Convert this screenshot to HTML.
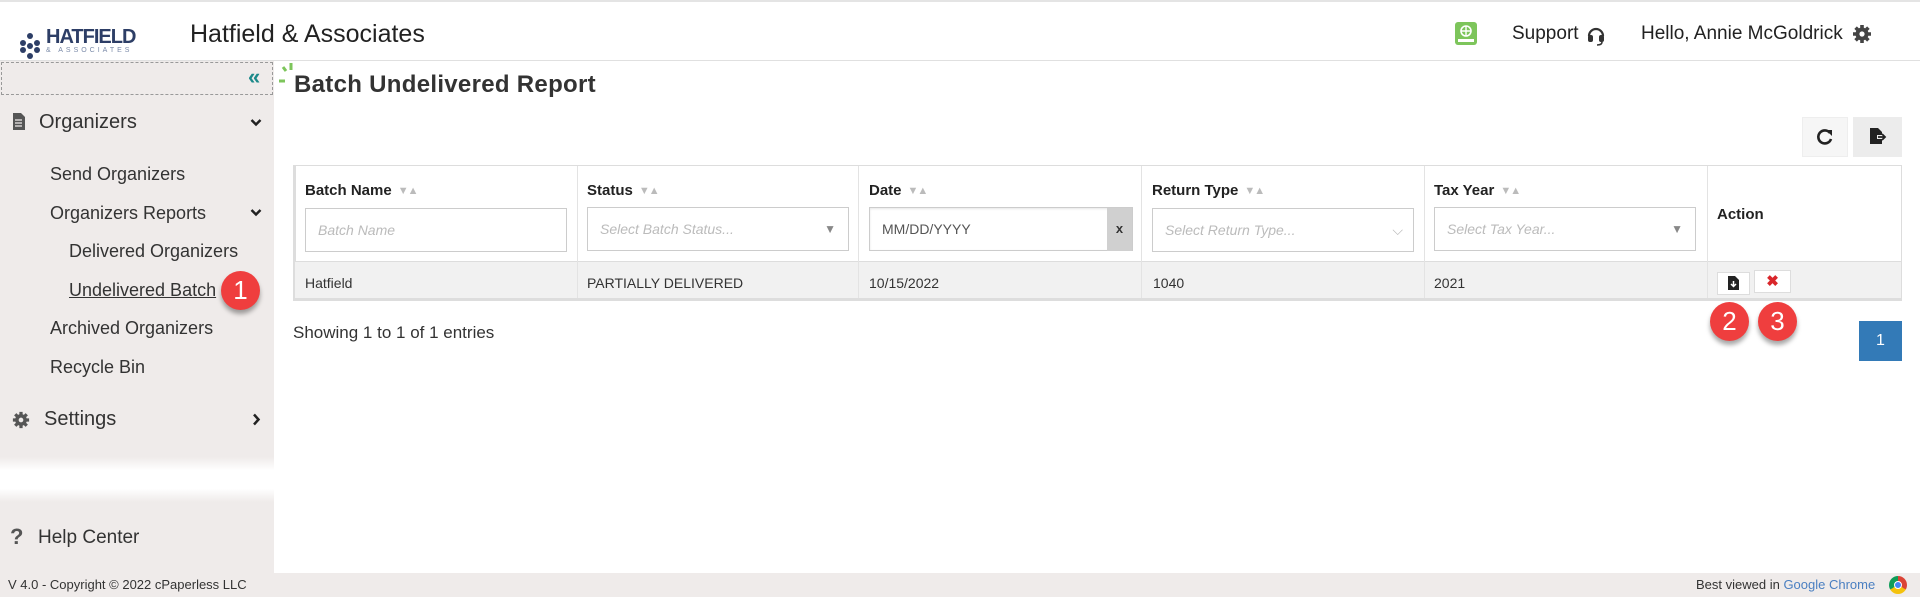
<!DOCTYPE html>
<html><head><meta charset="utf-8">
<style>
*{box-sizing:border-box;margin:0;padding:0}
body{width:1920px;height:597px;overflow:hidden;background:#fff;font-family:"Liberation Sans",Arial,sans-serif;color:#222;position:relative}
.a{position:absolute;white-space:nowrap}
.side{position:absolute;left:0;top:61px;width:274px;height:512px;background:#efebea}
.nav{font-size:18px;color:#333}
.th{font-weight:bold;font-size:15px;color:#222}
.sort{color:#bbb;font-size:11px;margin-left:6px;vertical-align:1px;letter-spacing:-1px}
.inp{position:absolute;height:44px;border:1px solid #ccc;background:#fff;font-style:italic;color:#bbb;font-size:14px;padding:0 12px;line-height:42px}
.td{font-size:14px;color:#333}
.badge{position:absolute;width:39px;height:39px;border-radius:50%;background:#ef3e3e;color:#fff;font-size:26px;text-align:center;line-height:39px;box-shadow:0 4px 5px rgba(0,0,0,.35)}
</style></head><body>
<!-- header -->
<div class="a" style="left:0;top:0;width:1920px;height:2px;background:#e4e4e4"></div>
<div class="a" style="left:0;top:60px;width:1920px;height:1px;background:#e0e0e0"></div>
<svg class="a" style="left:18px;top:32px" width="24" height="28" viewBox="0 0 24 28"><g fill="#2d3e66"><circle cx="12" cy="4" r="3"/><circle cx="5" cy="11" r="3"/><circle cx="19" cy="11" r="3"/><circle cx="12" cy="14" r="3"/><circle cx="5" cy="18" r="3"/><circle cx="19" cy="18" r="3"/><circle cx="12" cy="24" r="3"/></g></svg>
<div class="a" style="left:46px;top:26px;font-size:20px;font-weight:bold;color:#2d3e66;letter-spacing:-1px">HATFIELD</div>
<div class="a" style="left:46px;top:47px;font-size:7px;color:#7a8aa8;letter-spacing:3px">&amp; ASSOCIATES</div>
<div class="a" style="left:190px;top:20px;font-size:25px;color:#222">Hatfield &amp; Associates</div>
<svg class="a" style="left:1455px;top:22px" width="23" height="24" viewBox="0 0 23 24"><rect x="0" y="0" width="22" height="23" rx="3" fill="#7dc55b"/><circle cx="11" cy="9" r="5" fill="none" stroke="#fff" stroke-width="1.6"/><path d="M6 9h10M11 4v10" stroke="#fff" stroke-width="1.4"/><rect x="3" y="17" width="16" height="3" fill="#fff"/></svg>
<div class="a" style="left:1512px;top:23px;font-size:19px;color:#222">Support</div>
<svg class="a" style="left:1586px;top:24px" width="20" height="22" viewBox="0 0 20 22"><path d="M3 12a7 7 0 0 1 14 0" fill="none" stroke="#333" stroke-width="2.2"/><rect x="2" y="11" width="5" height="7" rx="2" fill="#333"/><rect x="13" y="11" width="5" height="7" rx="2" fill="#333"/><path d="M16 18q0 3-5 3" fill="none" stroke="#333" stroke-width="1.6"/></svg>
<div class="a" style="left:1641px;top:23px;font-size:19px;color:#222">Hello, Annie McGoldrick</div>
<svg class="a" style="left:1852px;top:24px" width="20" height="20" viewBox="0 0 20 20"><g fill="#444"><circle cx="10" cy="10" r="6.5"/><g stroke="#444" stroke-width="3.6"><path d="M10 1v18M1 10h18M3.6 3.6l12.8 12.8M16.4 3.6L3.6 16.4"/></g></g><circle cx="10" cy="10" r="2.6" fill="#fff"/></svg>

<!-- sidebar -->
<div class="side"></div>
<div class="a" style="left:0;top:457px;width:274px;height:45px;background:linear-gradient(#efebea,#fff 30%,#fff 70%,#efebea)"></div>
<div class="a" style="left:1px;top:62px;width:272px;height:33px;border:1px dashed #999"></div>
<div class="a" style="left:248px;top:64px;font-size:22px;font-weight:bold;color:#1d8a8a">«</div>
<svg class="a" style="left:12px;top:112px" width="14" height="19" viewBox="0 0 14 19"><path d="M1 1h8l4 4v13H1z" fill="#555"/><path d="M3 8h7M3 11h7M3 14h7" stroke="#efebea" stroke-width="1.3"/></svg>
<div class="a nav" style="left:39px;top:111px;font-size:20px">Organizers</div>
<svg class="a" style="left:250px;top:118px" width="12" height="9" viewBox="0 0 12 9"><path d="M1.5 2l4.5 4.5L10.5 2" fill="none" stroke="#222" stroke-width="2.5"/></svg>
<div class="a nav" style="left:50px;top:164px">Send Organizers</div>
<div class="a nav" style="left:50px;top:203px">Organizers Reports</div>
<svg class="a" style="left:250px;top:208px" width="12" height="9" viewBox="0 0 12 9"><path d="M1.5 2l4.5 4.5L10.5 2" fill="none" stroke="#222" stroke-width="2.5"/></svg>
<div class="a nav" style="left:69px;top:241px">Delivered Organizers</div>
<div class="a nav" style="left:69px;top:280px;text-decoration:underline">Undelivered Batch</div>
<div class="badge" style="left:221px;top:271px">1</div>
<div class="a nav" style="left:50px;top:318px">Archived Organizers</div>
<div class="a nav" style="left:50px;top:357px">Recycle Bin</div>
<svg class="a" style="left:12px;top:411px" width="18" height="18" viewBox="0 0 20 20"><g fill="#555"><circle cx="10" cy="10" r="6.5"/><g stroke="#555" stroke-width="3.6"><path d="M10 1v18M1 10h18M3.6 3.6l12.8 12.8M16.4 3.6L3.6 16.4"/></g></g><circle cx="10" cy="10" r="2.6" fill="#efebea"/></svg>
<div class="a nav" style="left:44px;top:408px;font-size:20px">Settings</div>
<svg class="a" style="left:252px;top:413px" width="9" height="13" viewBox="0 0 9 13"><path d="M2 1.5l4.5 5L2 11.5" fill="none" stroke="#222" stroke-width="2.5"/></svg>
<div class="a" style="left:10px;top:524px;font-size:22px;font-weight:bold;color:#555">?</div>
<div class="a nav" style="left:38px;top:527px;font-size:19px">Help Center</div>

<!-- footer -->
<div class="a" style="left:0;top:573px;width:1920px;height:24px;background:#efebea"></div>
<div class="a" style="left:8px;top:577px;font-size:13px;color:#333">V 4.0 - Copyright © 2022 cPaperless LLC</div>
<div class="a" style="left:1696px;top:577px;font-size:13px;color:#333">Best viewed in <span style="color:#4a7fc1">Google Chrome</span></div>
<div class="a" style="left:1889px;top:576px;width:18px;height:18px;border-radius:50%;background:conic-gradient(#db4437 0 120deg,#f4c20d 120deg 240deg,#0f9d58 240deg 360deg)"></div>
<div class="a" style="left:1894px;top:581px;width:8px;height:8px;border-radius:50%;background:#4285f4;border:1.5px solid #fff"></div>

<!-- content -->
<svg class="a" style="left:279px;top:63px" width="20" height="22" viewBox="0 0 20 22"><path d="M12 0v7" stroke="#7dc55b" stroke-width="3"/><path d="M4 4l3 4" stroke="#7dc55b" stroke-width="3"/><path d="M0 18h6" stroke="#7dc55b" stroke-width="3"/></svg>
<div class="a" style="left:294px;top:71px;font-size:24px;font-weight:bold;color:#333;letter-spacing:0.3px">Batch Undelivered Report</div>
<div class="a" style="left:1802px;top:117px;width:46px;height:40px;background:#f6f6f6;border:1px solid #eee"></div>
<svg class="a" style="left:1816px;top:128px" width="18" height="18" viewBox="0 0 18 18"><path d="M14 5a6.5 6.5 0 1 0 1 6" fill="none" stroke="#222" stroke-width="2.6"/><path d="M10 2h6v6z" fill="#222"/></svg>
<div class="a" style="left:1853px;top:117px;width:49px;height:40px;background:#ececec"></div>
<svg class="a" style="left:1869px;top:127px" width="18" height="18" viewBox="0 0 18 18"><path d="M1 1h8l4 4v3H8v4h5v5H1z" fill="#222"/><path d="M9 10h6M13 7l3 3-3 3" fill="none" stroke="#222" stroke-width="1.8"/></svg>

<!-- table -->
<div class="a" style="left:293px;top:165px;width:1609px;height:136px;border:1px solid #ddd;border-left:3px solid #ddd;border-bottom:3px solid #ddd"></div>
<div class="a" style="left:295px;top:261px;width:1606px;height:37px;background:#f1f1f1;border-top:1px solid #ddd"></div>
<div class="a" style="left:577px;top:166px;width:1px;height:132px;background:#e3e3e3"></div>
<div class="a" style="left:858px;top:166px;width:1px;height:132px;background:#e3e3e3"></div>
<div class="a" style="left:1141px;top:166px;width:1px;height:132px;background:#e3e3e3"></div>
<div class="a" style="left:1424px;top:166px;width:1px;height:132px;background:#e3e3e3"></div>
<div class="a" style="left:1707px;top:166px;width:1px;height:132px;background:#e3e3e3"></div>

<div class="a th" style="left:305px;top:182px">Batch Name<span class="sort">▼▲</span></div>
<div class="a th" style="left:587px;top:182px">Status<span class="sort">▼▲</span></div>
<div class="a th" style="left:869px;top:182px">Date<span class="sort">▼▲</span></div>
<div class="a th" style="left:1152px;top:182px">Return Type<span class="sort">▼▲</span></div>
<div class="a th" style="left:1434px;top:182px">Tax Year<span class="sort">▼▲</span></div>
<div class="a th" style="left:1717px;top:206px">Action</div>

<div class="inp" style="left:305px;top:208px;width:262px">Batch Name</div>
<div class="inp" style="left:587px;top:207px;width:262px">Select Batch Status...<span style="position:absolute;right:12px;color:#888;font-style:normal;font-size:12px">▼</span></div>
<div class="inp" style="left:869px;top:207px;width:264px;color:#555;font-style:normal;box-shadow:inset 0 1px 2px rgba(0,0,0,.1)">MM/DD/YYYY</div>
<div class="a" style="left:1107px;top:208px;width:25px;height:43px;background:#d0d0d0;font-size:13px;font-weight:bold;text-align:center;line-height:42px;color:#333">x</div>
<div class="inp" style="left:1152px;top:208px;width:262px">Select Return Type...<span style="position:absolute;right:10px;color:#bbb;font-style:normal">⌵</span></div>
<div class="inp" style="left:1434px;top:207px;width:262px">Select Tax Year...<span style="position:absolute;right:12px;color:#888;font-style:normal;font-size:12px">▼</span></div>

<div class="a td" style="left:305px;top:275px">Hatfield</div>
<div class="a td" style="left:587px;top:275px">PARTIALLY DELIVERED</div>
<div class="a td" style="left:869px;top:275px">10/15/2022</div>
<div class="a td" style="left:1153px;top:275px">1040</div>
<div class="a td" style="left:1434px;top:275px">2021</div>
<div class="a" style="left:1717px;top:272px;width:33px;height:23px;background:#fff;border:1px solid #ddd"></div>
<svg class="a" style="left:1728px;top:276px" width="11" height="14" viewBox="0 0 11 14"><path d="M0 0h7l4 4v10H0z" fill="#222"/><path d="M5.5 5v5M3 8l2.5 2.5L8 8" fill="none" stroke="#fff" stroke-width="1.5"/></svg>
<div class="a" style="left:1754px;top:270px;width:37px;height:23px;background:#fff;border:1px solid #ddd;color:#d9262b;font-size:15px;font-weight:bold;text-align:center;line-height:21px">✖</div>
<div class="badge" style="left:1710px;top:302px">2</div>
<div class="badge" style="left:1758px;top:302px">3</div>

<div class="a" style="left:293px;top:323px;font-size:17px;color:#333">Showing 1 to 1 of 1 entries</div>
<div class="a" style="left:1859px;top:321px;width:43px;height:40px;background:#337ab7;color:#fff;font-size:16px;text-align:center;line-height:40px">1</div>
</body></html>
